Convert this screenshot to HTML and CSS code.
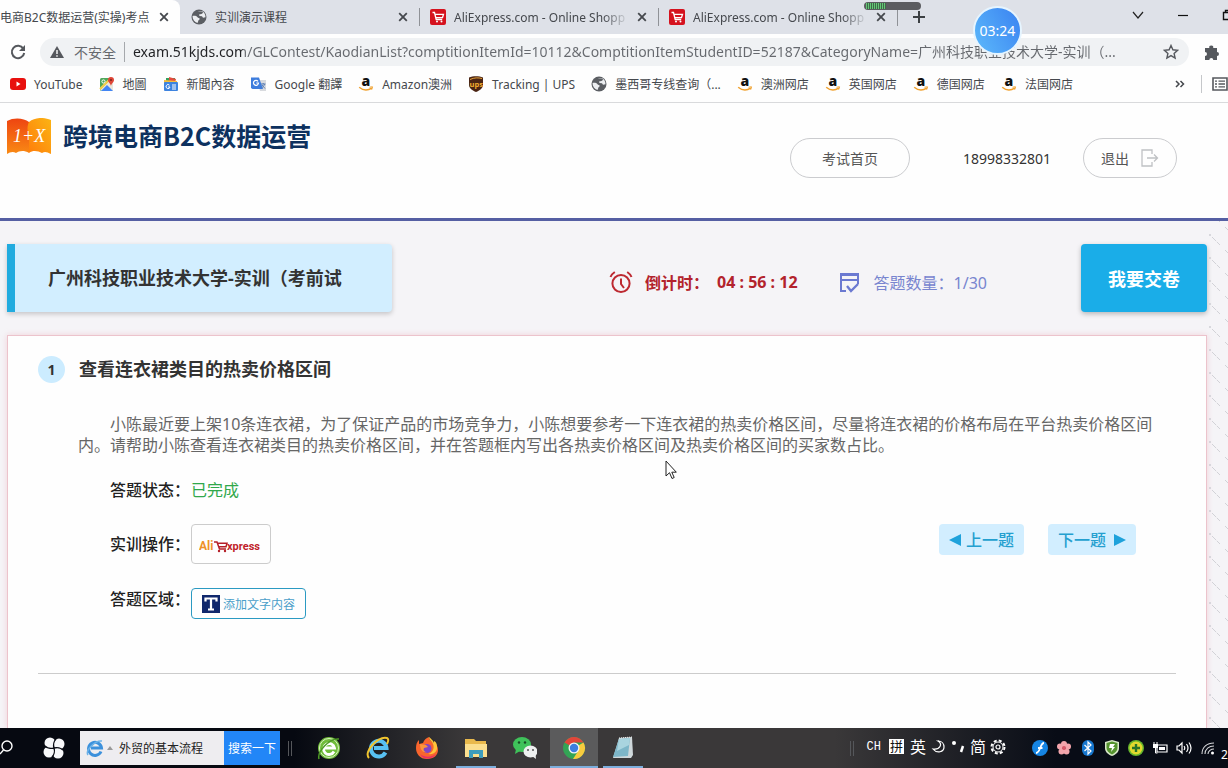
FILE: index.html
```html
<!DOCTYPE html>
<html lang="zh-CN">
<head>
    <meta charset="UTF-8">
    <meta name="viewport" content="width=device-width, initial-scale=1.0">
    <title>跨境电商B2C数据运营(实操)考点</title>
    <link rel="stylesheet" href="styles.css">
</head>
<body>
    <svg class="sprite" aria-hidden="true">
        <symbol id="globe" viewBox="0 0 16 16">
            <circle cx="8" cy="8" r="7.500" fill="#5b5e63"/>
            <path d="M1.500 7c2-.5 4 0 5 1.200.6.8 2 .6 2.200 1.600.1 1.200-1.600 1.200-1.600 2.600L6.500 14C3.500 13.200 1.500 10.500 1.500 7z" fill="#eceef1"/>
            <path d="M7 2.500c1.800-.6 4-.1 5.200 1.200L10.500 5 8 5.500l.5 1.500 2.500.3 1 1.500 2.500-.6c.2-3-1.500-5.200-3.500-6z" fill="#eceef1"/>
        </symbol>
        <symbol id="cart" viewBox="0 0 16 16">
            <rect width="16" height="16" rx="2" fill="#d5121e"/>
            <path d="M2.500 3.500h2l1.700 7h6M5 5.300h8.500l-1 3.400H5.800" fill="none" stroke="#fff" stroke-width="1.300"/>
            <circle cx="7" cy="12.600" r="1" fill="#fff"/>
            <circle cx="11.500" cy="12.600" r="1" fill="#fff"/>
        </symbol>
        <symbol id="close" viewBox="0 0 10 10">
            <path d="M1.200 1.200l7.600 7.600M8.800 1.200L1.200 8.800" stroke="#45484d" stroke-width="1.800"/>
        </symbol>
        <symbol id="amazon" viewBox="0 0 16 16">
            <text x="3.500" y="10" font-family="Open Sans, sans-serif" font-size="14" font-weight="800" fill="#111">a</text>
            <path d="M1.200 11.200c4 3.400 8.800 3.300 12.600.9" fill="none" stroke="#f0a02c" stroke-width="1.500"/>
            <path d="M11.500 11.200l3-.4-.8 2.900" fill="none" stroke="#f0a02c" stroke-width="1"/>
        </symbol>
    </svg>

    <header class="browser">
        <div class="tabs">
            <div class="tab tab--active">
                <span class="tab__title">电商B2C数据运营(实操)考点</span>
                <button class="tab__close" aria-label="关闭"><svg><use href="#close"/></svg></button>
            </div>
            <div class="tab">
                <svg class="icon"><use href="#globe"/></svg>
                <span class="tab__title">实训演示课程</span>
                <button class="tab__close" aria-label="关闭"><svg><use href="#close"/></svg></button>
            </div>
            <div class="tab tab--line">
                <svg class="icon"><use href="#cart"/></svg>
                <span class="tab__title tab__title--fade">AliExpress.com - Online Shopp</span>
                <button class="tab__close" aria-label="关闭"><svg><use href="#close"/></svg></button>
            </div>
            <div class="tab tab--line">
                <svg class="icon"><use href="#cart"/></svg>
                <span class="tab__title tab__title--fade">AliExpress.com - Online Shopp</span>
                <button class="tab__close" aria-label="关闭"><svg><use href="#close"/></svg></button>
            </div>
            <button class="tabs__new" aria-label="新标签页">
                <svg viewBox="0 0 12 12"><path d="M6 0v12M0 6h12" stroke="#3c4043" stroke-width="2"/></svg>
            </button>
            <div class="window">
                <button aria-label="搜索标签页"><svg viewBox="0 0 12 12"><path d="M1 3l5 6 5-6" fill="none" stroke="#222" stroke-width="1.200"/></svg></button>
                <button aria-label="最小化"><svg viewBox="0 0 12 12"><path d="M1 6.500h10" stroke="#111" stroke-width="1.200"/></svg></button>
                <button aria-label="还原"><svg viewBox="0 0 12 12"><path d="M1.500 3.500h7v7h-7zM3.500 3.500v-2h7v7h-2" fill="none" stroke="#111" stroke-width="1.400"/></svg></button>
            </div>
        </div>

        <div class="toolbar">
            <button class="toolbar__reload" aria-label="重新加载">
                <svg viewBox="0 0 16 16"><path d="M13.300 4.600A6.200 6.200 0 1 0 14.200 9" fill="none" stroke="#55585d" stroke-width="2"/><path d="M15 1v6H9z" fill="#55585d"/></svg>
            </button>
            <div class="address">
                <svg class="address__warn" viewBox="0 0 14 14"><path d="M7 1l7 12H0z" fill="#55585d"/><path d="M7 5v4M7 10.200v1.500" stroke="#fff" stroke-width="1.400"/></svg>
                <label class="address__label" for="url">不安全</label>
                <input class="address__input" id="url" type="text" value="exam.51kjds.com/GLContest/KaodianList?comptitionItemId=10112&amp;ComptitionItemStudentID=52187&amp;CategoryName=广州科技职业技术大学-实训（...">
                <button class="address__star" aria-label="收藏">
                    <svg viewBox="0 0 16 16"><path d="M8 1.500l1.900 4.300 4.700.5-3.500 3.100 1 4.600L8 11.600 3.900 14l1-4.600L1.400 6.300l4.700-.5z" fill="none" stroke="#55585d" stroke-width="1.400"/></svg>
                </button>
            </div>
            <button class="toolbar__ext" aria-label="扩展程序">
                <svg viewBox="0 0 16 16"><path d="M1 4h4.300a2 2 0 1 1 3.900 0H13v4a2 2 0 1 1 0 4v4H9.300a2 2 0 1 0-4 0H1v-4a2 2 0 1 0 0-4z" fill="#55585d"/></svg>
            </button>
        </div>

        <nav class="bookmarks">
            <a href="#"><svg class="icon" viewBox="0 0 16 16"><rect y="2" width="16" height="12" rx="3" fill="#e8100e"/><path d="M6.500 5.500l4 2.500-4 2.500z" fill="#fff"/></svg>YouTube</a>
            <a href="#"><svg class="icon" viewBox="0 0 16 16"><rect x="1" y="2" width="13" height="13" rx="1.500" fill="#4fa75a"/><path d="M1 14L12 3l2 2v10H3z" fill="#e9e5da"/><path d="M2 15l6-6 6 6z" fill="#4285f4"/><path d="M1 13L12 2" stroke="#f5cf48" stroke-width="2"/><circle cx="4.500" cy="5.500" r="1.600" fill="none" stroke="#fff"/><path d="M12 10c-.5-3-3-3.500-3-6a3 3 0 0 1 6 0c0 2.500-2.500 3-3 6z" fill="#df4536"/><circle cx="12" cy="4" r="1" fill="#7b231b"/></svg>地圖</a>
            <a href="#"><svg class="icon" viewBox="0 0 16 16"><path d="M3 2h9v4H3z" fill="#36a05a"/><path d="M6 1l7 2-1 4-6-2z" fill="#e44a3c"/><path d="M1 4l13 1v3H1z" fill="#f5bd3d"/><rect x="1" y="6" width="14" height="9" rx="1" fill="#3d83df"/><path d="M6.500 9.200a2 2 0 1 0 .5 1.800H5M9 9h4M9 11h4M9 13h4" fill="none" stroke="#fff"/></svg>新聞內容</a>
            <a href="#"><svg class="icon" viewBox="0 0 16 16"><path d="M6 4h9v11H9z" fill="#d8dade"/><path d="M0 1.500h8L12 13H1.500L0 12z" fill="#3e7ddd"/><path d="M7 5.300A2.500 2.500 0 1 0 7.500 7H5.300" fill="none" stroke="#fff" stroke-width="1.200"/><path d="M10 8h4.500M12.200 7v1M13.500 8c-.3 2-1.500 3-3 4M11 9l3 3.500" fill="none" stroke="#5b7fb5"/></svg>Google 翻譯</a>
            <a href="#"><svg class="icon"><use href="#amazon"/></svg>Amazon澳洲</a>
            <a href="#"><svg class="icon" viewBox="0 0 16 16"><path d="M1 1.500c4-1.700 10-1.700 14 0V9c0 3.500-3.500 5.500-7 7-3.500-1.500-7-3.500-7-7z" fill="#4a2413"/><path d="M2 3.500c4.500-2 8-2 12-1" fill="none" stroke="#e8a33a"/><text x="1.500" y="10.500" font-family="Open Sans, sans-serif" font-size="7.500" font-weight="700" fill="#f2ad2e">ups</text></svg>Tracking | UPS</a>
            <a href="#"><svg class="icon"><use href="#globe"/></svg>墨西哥专线查询（...</a>
            <a href="#"><svg class="icon"><use href="#amazon"/></svg>澳洲网店</a>
            <a href="#"><svg class="icon"><use href="#amazon"/></svg>英国网店</a>
            <a href="#"><svg class="icon"><use href="#amazon"/></svg>德国网店</a>
            <a href="#"><svg class="icon"><use href="#amazon"/></svg>法国网店</a>
            <button class="bookmarks__more" aria-label="更多书签"><svg viewBox="0 0 10 10"><path d="M1 2l3 3-3 3M5.500 2l3 3-3 3" fill="none" stroke="#45484d" stroke-width="1.500"/></svg></button>
            <button class="bookmarks__list" aria-label="阅读清单"><svg viewBox="0 0 16 14"><path d="M1 1h14v12H1z" fill="none" stroke="#55585d" stroke-width="1.600"/><path d="M3 4.200h2M3 7h2M3 9.800h2M6.500 4.200h6.500M6.500 7h6.500M6.500 9.800h6.500" stroke="#55585d" stroke-width="1.300"/></svg></button>
        </nav>
    </header>

    <div class="page">
        <header class="header">
            <div class="logo">
                <svg class="logo__book" viewBox="0 0 44 38">
                    <defs>
                        <linearGradient id="left-page" x1="0" y1="0" x2="0" y2="1"><stop offset="0" stop-color="#ee4511"/><stop offset="1" stop-color="#f98a14"/></linearGradient>
                        <linearGradient id="right-page" x1="0" y1="1" x2="1" y2="0"><stop offset="0" stop-color="#ff7c0a"/><stop offset="1" stop-color="#fbb414"/></linearGradient>
                    </defs>
                    <path d="M0 3C7-1 17 0 22 4v31c-5-3-10-2-13 0-3-2-6-1-9 1z" fill="url(#left-page)"/>
                    <path d="M22 4c6-5 15-5 22-2v34c-4-2-6-3-9-1-4-2-9-3-13 0V17c-2-4-2-9 0-13z" fill="url(#right-page)"/>
                    <text x="6" y="24" font-family="Liberation Serif, serif" font-size="18" font-style="italic" fill="#fff">1+X</text>
                </svg>
                <h1 class="logo__title">跨境电商B2C数据运营</h1>
            </div>
            <div class="account">
                <button class="pill pill--home">考试首页</button>
                <span class="account__phone">18998332801</span>
                <button class="pill pill--exit">退出
                    <svg viewBox="0 0 18 18"><path d="M11 5V1H1v16h10v-4M6 9h10M13 5.500L16.500 9 13 12.500" fill="none" stroke="#bfc1c4" stroke-width="1.300"/></svg>
                </button>
            </div>
        </header>

        <main class="main">
            <div class="exam">
                <div class="exam__bar">
                    <h2 class="exam__name">广州科技职业技术大学-实训（考前试</h2>
                    <div class="exam__stats">
                        <div class="stat stat--time">
                            <svg class="stat__icon" viewBox="0 0 24 24"><circle cx="12" cy="13.500" r="8.600" fill="none" stroke="#bd2931" stroke-width="2"/><path d="M12 8.500V14l3 4M1.500 7c.8-2 2-3.500 4.300-5M22.500 7c-.8-2-2-3.500-4.300-5" fill="none" stroke="#bd2931" stroke-width="2"/></svg>
                            <span>倒计时：</span><span>04 : 56 : 12</span>
                        </div>
                        <div class="stat stat--count">
                            <svg class="stat__icon" viewBox="0 0 24 24"><path d="M20 14V4H3v17h5" fill="none" stroke="#6b79d1" stroke-width="2"/><path d="M3 3h17v3H3z" fill="#6b79d1"/><path d="M3 10h17" stroke="#6b79d1" stroke-width="2"/><path d="M9 16l4 5 7-7" fill="none" stroke="#6b79d1" stroke-width="2.400"/></svg>
                            <span>答题数量：1/30</span>
                        </div>
                    </div>
                    <button class="exam__submit">我要交卷</button>
                </div>

                <section class="question">
                    <div class="question__head">
                        <span class="question__number">1</span>
                        <h3 class="question__title">查看连衣裙类目的热卖价格区间</h3>
                    </div>
                    <div class="question__body">
                        <p class="question__text">小陈最近要上架10条连衣裙，为了保证产品的市场竞争力，小陈想要参考一下连衣裙的热卖价格区间，尽量将连衣裙的价格布局在平台热卖价格区间内。请帮助小陈查看连衣裙类目的热卖价格区间，并在答题框内写出各热卖价格区间及热卖价格区间的买家数占比。</p>
                        <div class="row">
                            <span class="row__label">答题状态：</span>
                            <span class="row__done">已完成</span>
                        </div>
                        <div class="row row--action">
                            <span class="row__label">实训操作：</span>
                            <button class="shop" aria-label="AliExpress">
                                <svg viewBox="0 0 64 16">
                                    <text x="0" y="12" font-family="Roboto, sans-serif" font-size="12" font-weight="700" fill="#ee9228">Ali</text>
                                    <path d="M15 4h3l2.500 7H27M18.500 5.300H28l-1 3.400h-7" fill="none" stroke="#b51f28" stroke-width="1.500"/>
                                    <circle cx="20" cy="13" r="1.200" fill="#b51f28"/><circle cx="26" cy="13" r="1.200" fill="#b51f28"/>
                                    <text x="28" y="12" font-family="Roboto, sans-serif" font-size="11" font-weight="700" fill="#c11f2b">xpress</text>
                                </svg>
                            </button>
                            <div class="pager">
                                <button class="pager__button"><svg viewBox="0 0 12 12"><path d="M12 0v12L0 6z"/></svg>上一题</button>
                                <button class="pager__button pager__button--next">下一题<svg viewBox="0 0 12 12"><path d="M0 0v12l12-6z"/></svg></button>
                            </div>
                        </div>
                        <div class="row row--answer">
                            <span class="row__label">答题区域：</span>
                            <button class="add-text">
                                <svg viewBox="0 0 18 18"><rect width="18" height="18" fill="#10276c"/><path d="M3.500 6.500V3.500h11v3M9 3.500v11M6 14.500h6" fill="none" stroke="#fff" stroke-width="2.200"/></svg>添加文字内容
                            </button>
                        </div>
                    </div>
                    <hr class="question__line">
                </section>
            </div>
            <svg class="main__pattern" aria-hidden="true">
                <pattern id="dashes" width="28" height="23" patternUnits="userSpaceOnUse">
                    <circle cx="3" cy="14" r="1" fill="#cfcfd4"/>
                    <path d="M5 16l8 8M5 -7l8 8M18 6l8 8" stroke="#d2d2d7" stroke-dasharray="6 1"/>
                </pattern>
                <rect width="100%" height="100%" fill="url(#dashes)"/>
            </svg>
        </main>
    </div>

    <footer class="taskbar">
        <button class="taskbar__find" aria-label="搜索"><svg viewBox="0 0 14 16"><circle cx="7" cy="6" r="5" fill="none" stroke="#fff" stroke-width="1.400"/><path d="M3.500 10L0 14" stroke="#fff" stroke-width="1.400"/></svg></button>
        <button class="taskbar__wheel" aria-label="助手">
            <svg viewBox="0 0 22 22">
                <g fill="#f7f8fa"><circle cx="7" cy="6" r="5.500"/><circle cx="16" cy="7" r="5.500"/><circle cx="15" cy="16" r="5.500"/><circle cx="6" cy="15" r="5.500"/><path d="M6 6h10v10H6z"/></g>
                <path d="M11 11C8 12 4 11 2 9M11 11c-1-3 0-7 2-9M11 11c3-1 7 0 9 2M11 11c1 3 0 7-2 9" fill="none" stroke="#080b13" stroke-width="1.400"/>
            </svg>
        </button>
        <form class="search">
            <svg class="search__icon" viewBox="0 0 18 18"><path d="M15 12.500A6.500 6.500 0 1 1 15.500 9H5" fill="none" stroke="#3c91dc" stroke-width="3"/><path d="M2 16C-1 12 9 1 16 2" fill="none" stroke="#6bb2e8" stroke-width="1.500"/></svg>
            <svg class="search__arrow" viewBox="0 0 6 4"><path d="M3 0l3 4H0z" fill="#999"/></svg>
            <input class="search__input" type="text" aria-label="搜索" value="外贸的基本流程">
            <button class="search__button" type="button">搜索一下</button>
        </form>
        <span class="taskbar__grip"></span>
        <nav class="apps">
            <button class="app" aria-label="360浏览器"><svg viewBox="0 0 24 24"><circle cx="12" cy="12" r="11" fill="#71bd3b"/><circle cx="12" cy="12" r="9.500" fill="none" stroke="#d9f1c4"/><path d="M17 15.500a5.500 5.500 0 1 1 .5-3.500H8" fill="none" stroke="#fff" stroke-width="2.800"/><path d="M2 23C0 16 12 2 22 3" fill="none" stroke="#4d9b25" stroke-width="1.500"/></svg></button>
            <button class="app" aria-label="Internet Explorer"><svg viewBox="0 0 24 24"><path d="M19.500 16.500A7.800 7.800 0 1 1 20.500 12H8" fill="none" stroke="#58c1f3" stroke-width="4"/><path d="M3 22C-3 16 12 0 21 2c2 1 1 4 0 6" fill="none" stroke="#f1c42e" stroke-width="2"/></svg></button>
            <button class="app" aria-label="Firefox"><svg viewBox="0 0 24 24"><path d="M12 23C5 23 1 18 1 12c0-4 1-6 3-8v4l4-1c1-3 3-5 6-6 0 3 3 4 4 6l2-1c2 3 3 6 3 8 0 5-4 9-11 9z" fill="#f9652d"/><path d="M14 1c0 3 3 4 4 7 2 5-1 9-5 10 6 1 10-3 9-8-.5-3-1-4-3-5v2c-1-3-3-4-5-6z" fill="#fec53a"/><path d="M5 18c3 6 12 6 16 0-4 3-11 4-16 0z" fill="#e92f68"/><circle cx="12" cy="12.500" r="4.500" fill="#8245c4"/><path d="M5 8l6 1 2 2-4 1c-1 2 0 4 3 4-4 1-7-2-7-8z" fill="#fb963c"/></svg></button>
            <button class="app app--open" aria-label="文件资源管理器"><svg viewBox="0 0 24 24"><path d="M1 3h9l2 2h10v16H1z" fill="#e9b94c"/><path d="M1 8h22v13H1z" fill="#fbdf8f"/><path d="M5 14h14v8h-4v-4H9v4H5z" fill="#3d9dbd"/></svg></button>
            <button class="app" aria-label="微信"><svg viewBox="0 0 24 24"><ellipse cx="9" cy="8.500" rx="9" ry="7.500" fill="#3fc25a"/><path d="M3 13l-1 5 5-3z" fill="#3fc25a"/><ellipse cx="17.500" cy="15.500" rx="7" ry="6" fill="#eef0f0"/><path d="M19 20l4 3-.5-5z" fill="#eef0f0"/><circle cx="6" cy="6.500" r="1.200" fill="#174c25"/><circle cx="12" cy="6.500" r="1.200" fill="#174c25"/><circle cx="15" cy="14" r="1" fill="#555"/><circle cx="20" cy="14" r="1" fill="#555"/></svg></button>
            <button class="app app--active" aria-label="Chrome"><svg viewBox="0 0 24 24"><circle cx="12" cy="12" r="11" fill="#33a455"/><path d="M12 12l9.500-5.500A11 11 0 0 1 11 23l5.500-8.500z" fill="#f8cb3e"/><path d="M12 12L2.500 6.500A11 11 0 0 1 21.500 6.500H12z" fill="#e2453a"/><circle cx="12" cy="12" r="5.500" fill="#f4f4f4"/><circle cx="12" cy="12" r="4.200" fill="#3d7de0"/></svg></button>
            <button class="app app--open" aria-label="记事本"><svg viewBox="0 0 24 24"><path d="M8 2l13-1 1 18-2 3H2z" fill="#cfd8db"/><path d="M8 3l11-1-2 18-15 1z" fill="#7db6c8"/><path d="M8 3l11-1-1 7-12 6z" fill="#a9d4df"/><path d="M8 2l13-1" stroke="#eee" stroke-dasharray="1 1"/></svg></button>
        </nav>
        <div class="tray">
            <span class="taskbar__grip"></span>
            <div class="ime">
                <span class="ime__lang">CH</span>
                <span class="ime__pin">拼</span>
                <span>英</span>
                <svg viewBox="0 0 16 16"><path d="M8 2c5 3 2 9-5 8 4 5 11 3 11-2 0-3-2-6-6-6z" fill="none" stroke="#fff" stroke-width="1.200"/></svg>
                <svg viewBox="0 0 16 16"><circle cx="4" cy="4" r="2" fill="#fff"/><path d="M13 7l-2 6" stroke="#fff" stroke-width="2.500"/></svg>
                <span>简</span>
                <svg viewBox="0 0 16 16"><circle cx="8" cy="8" r="6.500" fill="none" stroke="#fff" stroke-width="2" stroke-dasharray="3 2.100"/><circle cx="8" cy="8" r="5" fill="none" stroke="#fff"/><circle cx="8" cy="8" r="2" fill="none" stroke="#fff" stroke-width="1.200"/></svg>
            </div>
            <div class="status">
                <svg viewBox="0 0 16 16"><circle cx="8" cy="8" r="8" fill="#1685e3"/><path d="M12 3C8 3 8.500 13 4 13M6 8h4.500" fill="none" stroke="#fff" stroke-width="1.800"/></svg>
                <svg viewBox="0 0 16 16"><g fill="#f3a5ac"><circle cx="8" cy="4" r="3"/><circle cx="4" cy="6.500" r="3"/><circle cx="12" cy="6.500" r="3"/><circle cx="5.500" cy="11.500" r="3"/><circle cx="10.500" cy="11.500" r="3"/></g><circle cx="8" cy="8" r="2" fill="#d95868"/></svg>
                <svg viewBox="0 0 16 16"><rect x="2" width="12" height="16" rx="6" fill="#1576ce"/><path d="M4.500 5l6.500 6-3 3V2l3 3-6.500 6" fill="none" stroke="#fff" stroke-width="1.200"/></svg>
                <svg viewBox="0 0 16 16"><path d="M8 0l7 2v6c0 4-3 6.500-7 8-4-1.500-7-4-7-8V2z" fill="#d8e8c8"/><path d="M8 1.500l5.500 1.500v5c0 3-2.500 5-5.500 6.500C5 13 2.500 11 2.500 8V3z" fill="#55932e"/><path d="M6 4h5L9 7h2l-4 5 1-4H5z" fill="#fff"/></svg>
                <svg viewBox="0 0 16 16"><circle cx="8" cy="8" r="8" fill="#66b62d"/><circle cx="8" cy="8" r="6.500" fill="#e2d92e"/><path d="M8 4v8M4 8h8" stroke="#287428" stroke-width="2.400"/></svg>
                <svg viewBox="0 0 16 16"><path d="M5 5h10v7H5z" fill="none" stroke="#fff" stroke-width="1.200"/><path d="M7 7h6v3H7zM1 4h5v4H1z" fill="#fff"/><path d="M2 2v3M5 2v3M3.500 7v6h2" fill="none" stroke="#fff"/></svg>
                <svg viewBox="0 0 16 16"><path d="M1 6h2l3-3v10l-3-3H1zM8 6q1.500 2 0 4M10.500 4q3 4 0 8M13 2.500q4 5.500 0 11" fill="none" stroke="#fff" stroke-width="1.200"/></svg>
                <svg viewBox="0 0 16 16"><path d="M2 14C2 7 7 3 14 3M5 14c0-5 4-8 9-8M8 14c0-3 3-5 6-5" fill="none" stroke="#d5d6d9" stroke-width="1.100"/><circle cx="12.500" cy="13" r="1.500" fill="#fff"/></svg>
            </div>
            <time class="tray__clock">2</time>
        </div>
    </footer>

    <div class="meter"><span class="meter__level"></span></div>
    <div class="recorder">03:24</div>
    <svg class="pointer" viewBox="0 0 12 20" aria-hidden="true"><path d="M1 1v15l3.500-3.300L7 18.500l2.200-1-2.400-5.300h4.500z" fill="#fff" stroke="#222" stroke-width="1"/></svg>
</body>
</html>
```

FILE: styles.css
```css
* {
    box-sizing: border-box;
}
body {
    margin: 0;
    height: 100vh;
    display: flex;
    flex-direction: column;
    overflow: hidden;
    font-family: "Noto Sans", "Noto Sans CJK SC", sans-serif;
    font-size: 12px;
    color: #333;
    background-color: #fefefe;
}
button {
    display: flex;
    align-items: center;
    justify-content: center;
    flex-shrink: 0;
    padding: 0;
    border: 0;
    background: none;
    font-family: inherit;
    color: inherit;
    cursor: pointer;
}
input {
    border: 0;
    padding: 0;
    background: none;
    font-family: inherit;
    outline: none;
}
svg {
    display: block;
    flex-shrink: 0;
}
.sprite {
    display: none;
}
.icon {
    width: 16px;
    height: 16px;
}

/* browser */
.browser {
    flex-shrink: 0;
    border-bottom: 1px solid #d9dadc;
}
.tabs {
    display: flex;
    height: 34px;
    background-color: #dee1e8;
    overflow: hidden;
}
.tab {
    display: flex;
    align-items: center;
    width: 239px;
    gap: 8px;
    padding: 0 11px;
    color: #45484d;
}
.tab--active {
    width: 180px;
    padding-left: 0;
    background-color: #fefefe;
    border-radius: 0 8px 0 0;
}
.tab--line {
    background: linear-gradient(#8f9297, #8f9297) 0 8px / 1px 18px no-repeat;
}
.tab__title {
    flex: 1;
    overflow: hidden;
    white-space: nowrap;
}
.tab__title--fade {
    mask-image: linear-gradient(90deg, #000 85%, transparent);
}
.tab__close svg {
    width: 10px;
    height: 10px;
}
.tabs__new {
    padding: 0 16px;
    background: linear-gradient(#8f9297, #8f9297) 0 8px / 1px 18px no-repeat;
}
.tabs__new svg {
    width: 12px;
    height: 12px;
}
.window {
    display: flex;
    gap: 33px;
    margin-left: auto;
    margin-right: -6px;
    padding-bottom: 4px;
}
.window svg {
    width: 12px;
    height: 12px;
}
.toolbar {
    display: flex;
    align-items: center;
    height: 36px;
    padding-left: 10px;
}
.toolbar__reload svg,
.toolbar__ext svg,
.address__star svg {
    width: 16px;
    height: 16px;
}
.address {
    flex: 1;
    display: flex;
    align-items: center;
    height: 28px;
    margin: 0 15px 0 14px;
    padding: 0 10px;
    border-radius: 14px;
    background-color: #f0f2f4;
    font-size: 14px;
}
.address__warn {
    width: 14px;
    height: 14px;
}
.address__label {
    margin: 0 8px 0 10px;
    color: #66696e;
}
/* host is darker than the rest of the address */
.address__input {
    flex: 1;
    min-width: 0;
    padding-left: 8px;
    border-left: 1px solid #a5a8ac;
    font-size: 14px;
    line-height: 20px;
    color: transparent;
    background: linear-gradient(90deg, #202124 118px, #66696e 118px);
    background-clip: text;
}
.toolbar__ext {
    padding-right: 8px;
}
.bookmarks {
    display: flex;
    align-items: center;
    gap: 16px;
    height: 32px;
    padding: 0 0 4px 10px;
    overflow: hidden;
}
.bookmarks a {
    display: flex;
    align-items: center;
    gap: 8px;
    color: #45484d;
    text-decoration: none;
    white-space: nowrap;
}
.bookmarks__more {
    margin-left: auto;
}
.bookmarks__more svg {
    width: 10px;
    height: 10px;
}
.bookmarks__list {
    height: 18px;
    padding-left: 10px;
    border-left: 1px solid #c5c7ca;
}
.bookmarks__list svg {
    width: 16px;
    height: 14px;
}

/* page */
.page {
    flex: 1;
    min-height: 0;
    display: flex;
    flex-direction: column;
}
.header {
    display: flex;
    justify-content: space-between;
    align-items: flex-start;
    height: 118px;
    flex-shrink: 0;
    padding: 15px 51px 0 7px;
    border-bottom: 3px solid #555fa3;
}
.logo {
    display: flex;
    gap: 12px;
}
.logo__book {
    width: 44px;
    height: 38px;
}
.logo__title {
    margin: 0;
    font-family: "Noto Sans CJK SC", sans-serif;
    font-size: 25px;
    line-height: 34px;
    color: #0d315f;
}
.account {
    display: flex;
    align-items: center;
    padding-top: 20px;
    font-size: 14px;
}
.pill {
    height: 40px;
    border: 1px solid #cbcccf;
    border-radius: 20px;
    font-size: 14px;
    color: #555;
}
.pill--home {
    width: 120px;
}
.pill--exit {
    width: 94px;
    gap: 12px;
}
.pill svg {
    width: 18px;
    height: 18px;
}
.account__phone {
    margin: 0 32px 0 53px;
}
.main {
    flex: 1;
    min-height: 0;
    display: flex;
    background-color: #f5f4f7;
}
.exam {
    flex: 1;
    display: flex;
    flex-direction: column;
    padding: 23px 0 0 7px;
}
.main__pattern {
    width: 21px;
    height: 100%;
}
.exam__bar {
    display: flex;
    height: 68px;
}
.exam__name {
    width: 385px;
    margin: 0;
    padding-left: 33px;
    border-left: 8px solid #21abdf;
    border-radius: 0 4px 4px 0;
    background-color: #d2eeff;
    box-shadow: 0 2px 5px rgba(0, 0, 0, 0.2);
    font-size: 18px;
    line-height: 68px;
}
.exam__stats {
    display: flex;
    align-items: center;
    gap: 40px;
    margin: 8px 94px 0 auto;
    font-size: 16px;
}
.stat {
    display: flex;
    align-items: center;
    gap: 8px;
}
.stat__icon {
    width: 24px;
    height: 24px;
    margin-right: 4px;
}
.stat--time {
    color: #b3232c;
    font-weight: bold;
}
.stat--count {
    color: #7885cf;
}
.exam__submit {
    width: 126px;
    border-radius: 4px;
    background-color: #1aade8;
    box-shadow: 0 2px 5px rgba(0, 0, 0, 0.25);
    font-size: 18px;
    font-weight: bold;
    color: #fff;
}
.question {
    flex: 1;
    margin-top: 23px;
    padding: 20px 30px 0;
    border: 1px solid #ecc3cc;
    border-bottom: 0;
    background-color: #fefefe;
    box-shadow: 0 0 6px rgba(240, 160, 175, 0.4);
}
.question__head {
    display: flex;
    align-items: center;
    gap: 14px;
}
.question__number {
    width: 27px;
    border-radius: 50%;
    background-color: #ccecff;
    font-size: 14px;
    font-weight: bold;
    line-height: 27px;
    text-align: center;
}
.question__title {
    margin: 0;
    font-size: 18px;
    line-height: 27px;
}
.question__body {
    padding-left: 40px;
}
.question__text {
    margin: 31px 0 23px;
    padding-right: 20px;
    font-size: 16px;
    line-height: 21px;
    text-indent: 32px;
    color: #666;
}
.row {
    display: flex;
    align-items: center;
    padding-left: 32px;
    font-size: 16px;
    line-height: 22px;
}
.row__label {
    width: 81px;
    font-weight: 500;
    color: #222;
}
.row__done {
    color: #30a84b;
}
.row--action {
    margin: 23px 0 24px;
}
.shop {
    width: 80px;
    height: 40px;
    padding-top: 4px;
    border: 1px solid #ccc;
    border-radius: 4px;
}
.shop svg {
    width: 64px;
    height: 16px;
}
.pager {
    display: flex;
    align-self: flex-start;
    gap: 24px;
    margin: 0 40px 0 auto;
}
.pager__button {
    gap: 5px;
    height: 31px;
    padding: 0 10px;
    border-radius: 4px;
    background-color: #d2eeff;
    font-size: 16px;
    font-weight: 500;
    line-height: 28px;
    color: #249fcf;
}
.pager__button--next {
    gap: 8px;
}
.pager__button svg {
    width: 12px;
    height: 12px;
    fill: #1fa2db;
}
.row--answer {
    align-items: flex-start;
}
.add-text {
    gap: 3px;
    height: 31px;
    padding: 0 10px;
    border: 1px solid #2b9ac2;
    border-radius: 4px;
    font-size: 12px;
    color: #4a9fc9;
}
.add-text svg {
    width: 18px;
    height: 18px;
}
.question__line {
    margin: 54px 0 0;
    border: 0;
    border-top: 1px solid #ccc;
}

/* taskbar */
.taskbar {
    display: flex;
    align-items: center;
    height: 40px;
    flex-shrink: 0;
    overflow: hidden;
    background: linear-gradient(90deg, #060911 24%, #3a3839 38%, #3a3839 68%, #080c16 86%);
    color: #fff;
}
.taskbar__find svg {
    width: 14px;
    height: 16px;
}
.taskbar__wheel {
    margin: 0 15px 0 29px;
}
.taskbar__wheel svg {
    width: 22px;
    height: 22px;
}
.search {
    display: flex;
    align-items: center;
    width: 200px;
    height: 34px;
    padding-left: 6px;
    background-color: #eeedf0;
}
.search__icon {
    width: 18px;
    height: 18px;
}
.search__arrow {
    width: 6px;
    height: 4px;
    margin: 0 6px 0 3px;
}
.search__input {
    flex: 1;
    min-width: 0;
    font-size: 12px;
    color: #222;
}
.search__button {
    width: 56px;
    height: 34px;
    background-color: #2286f7;
    font-size: 12px;
}
.taskbar__grip {
    width: 4px;
    height: 15px;
    margin: 0 13px 0 8px;
    border: solid #55575b;
    border-width: 0 1px;
}
.apps {
    display: flex;
    align-self: stretch;
    gap: 1px;
}
.app {
    width: 48px;
}
.app svg {
    width: 24px;
    height: 24px;
}
.app--active {
    background-color: #5b5b5c;
    border-bottom: 2px solid #7caedd;
    padding-top: 2px;
}
.app--open {
    background: linear-gradient(#7caedd, #7caedd) 50% 100% / 40px 2px no-repeat;
}
.tray {
    display: flex;
    align-items: center;
    margin-left: auto;
}
.ime {
    display: flex;
    align-items: center;
    gap: 4px;
    margin-right: 26px;
    padding-bottom: 3px;
    font-size: 16px;
    line-height: 20px;
}
.ime svg,
.status svg {
    width: 16px;
    height: 16px;
}
.ime__lang {
    margin-right: 4px;
    font-family: "Liberation Mono", monospace;
    font-size: 12px;
}
.ime__pin {
    width: 15px;
    margin-right: 2px;
    background-color: #fff;
    font-size: 13px;
    line-height: 15px;
    text-align: center;
    color: #111;
}
.status {
    display: flex;
    gap: 8px;
}
.tray__clock {
    align-self: flex-end;
    width: 7px;
    margin-left: 5px;
    padding-top: 12px;
}

/* floating widgets */
.meter {
    position: absolute;
    top: 2px;
    right: 307px;
    width: 57px;
    height: 8px;
    padding: 1px 2px;
    border-radius: 4px;
    background-color: #5b5c60;
}
.meter__level {
    display: block;
    width: 20px;
    height: 6px;
    background: repeating-linear-gradient(90deg, #64c777 0 1px, #3e6947 1px 2px);
}
.recorder {
    position: absolute;
    top: 6px;
    right: 206px;
    width: 49px;
    height: 49px;
    border: 2px solid #e6f5ff;
    border-radius: 50%;
    background: linear-gradient(60deg, #5cb9fb, #3a82f1);
    font-size: 14px;
    line-height: 45px;
    text-align: center;
    color: #fff;
}
.pointer {
    position: absolute;
    top: 460px;
    left: 665px;
    width: 12px;
    height: 20px;
}
```
